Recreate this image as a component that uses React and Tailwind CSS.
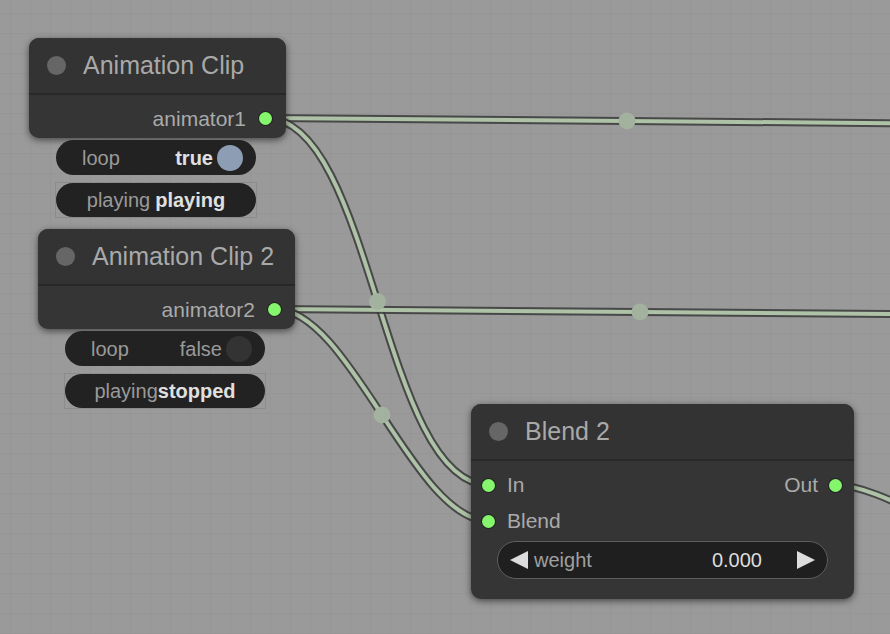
import React from "react";

// link endpoints (slot centers in canvas px)
const links = [
  { from: { x: 266, y: 118 }, to: { x: 988, y: 124 } },
  { from: { x: 266, y: 118 }, to: { x: 489, y: 485 } },
  { from: { x: 275, y: 309 }, to: { x: 1005, y: 315 } },
  { from: { x: 275, y: 309 }, to: { x: 489, y: 521 } },
  { from: { x: 836, y: 485 }, to: { x: 1010, y: 545 } },
];

const curve = (a, b) => {
  const d = Math.hypot(b.x - a.x, b.y - a.y) * 0.25;
  return {
    path: `M${a.x},${a.y} C${a.x + d},${a.y} ${b.x - d},${b.y} ${b.x},${b.y}`,
    mid: { x: (a.x + b.x) / 2, y: (a.y + b.y) / 2 },
  };
};

const Dot = () => (
  <span className="w-[13px] h-[13px] shrink-0 rounded-full bg-[#86f56e] shadow-[0_0_0_1px_rgba(0,0,0,0.35)]" />
);

const NodeTitle = ({ title }) => (
  <div className="h-[57px] flex items-center gap-[17px] pl-[18px] bg-[#333333] rounded-t-[10px] border-b-2 border-[#282828]">
    <span className="w-[19px] h-[19px] rounded-full bg-[#666666]" />
    <span className="text-[25px] text-[#a9a9a9]">{title}</span>
  </div>
);

const ClipNode = ({ pos, title, output, loop, playing }) => (
  <div className={`absolute ${pos} w-[257px]`}>
    <div className="rounded-[10px] bg-[#353535] shadow-[0_2px_7px_rgba(0,0,0,0.55)]">
      <NodeTitle title={title} />
      <div className="h-[43px] flex items-center justify-end gap-[13px] pr-[14px] pt-[4px]">
        <span className="text-[21px] text-[#aaaaaa]">{output}</span>
        <Dot />
      </div>
    </div>
    <div className="ml-[27px] mr-[30px] mt-[2px] h-[35px] rounded-full bg-[#222222] flex items-center pl-[26px] pr-[13px] text-[20px]">
      <span className="text-[#9a9a9a]">loop</span>
      <span className={`ml-auto mr-[4px] ${loop ? "text-[#e0e0e0] font-bold" : "text-[#9a9a9a]"}`}>{loop ? "true" : "false"}</span>
      <span className={`w-[26px] h-[26px] rounded-full ${loop ? "bg-[#8d9db4]" : "bg-[#333333]"}`} />
    </div>
    <div className="ml-[26px] mr-[29px] mt-[7px] p-[1px] border border-[#8c8c8c]">
      <div className="h-[34px] rounded-full bg-[#222222] flex items-center justify-center text-[20px] -m-[1px]">
        <span className="text-[#9a9a9a]">playing</span>
        <span className={`text-[#e0e0e0] font-bold ${playing ? "ml-[5px]" : ""}`}>{playing ? "playing" : "stopped"}</span>
      </div>
    </div>
  </div>
);

const Tri = ({ dir }) => (
  <svg width="20" height="20" viewBox="0 0 20 20">
    {dir === "left" ? <polygon points="19,1 19,19 1,10" fill="#dddddd" /> : <polygon points="1,1 1,19 19,10" fill="#dddddd" />}
  </svg>
);

export default function App() {
  return (
    <div className="relative w-[890px] h-[634px] overflow-hidden bg-[#9a9a9a] font-['Liberation_Sans',Arial,sans-serif]">
      <svg className="absolute inset-0" width="890" height="634">
        <defs>
          <pattern id="grid" x="10" y="13" width="20" height="20" patternUnits="userSpaceOnUse">
            <path d="M20,0 L0,0 L0,20" fill="none" stroke="#919191" strokeWidth="1" />
          </pattern>
        </defs>
        <rect width="890" height="634" fill="url(#grid)" />
        {links.map((l, i) => {
          const c = curve(l.from, l.to);
          return (
            <g key={i}>
              <path d={c.path} fill="none" stroke="#3a3a3a" strokeWidth="8" strokeOpacity="0.85" />
              <path d={c.path} fill="none" stroke="#adc2a6" strokeWidth="4" />
            </g>
          );
        })}
        {links.slice(0, 4).map((l, i) => {
          const c = curve(l.from, l.to);
          return <circle key={i} cx={c.mid.x} cy={c.mid.y} r="8.5" fill="#a3b19f" />;
        })}
      </svg>

      <ClipNode pos="left-[29px] top-[38px]" title="Animation Clip" output="animator1" loop playing />
      <ClipNode pos="left-[38px] top-[229px]" title="Animation Clip 2" output="animator2" loop={false} playing={false} />

      <div className="absolute left-[471px] top-[404px] w-[383px] rounded-[10px] bg-[#353535] shadow-[0_2px_7px_rgba(0,0,0,0.55)]">
        <NodeTitle title="Blend 2" />
        <div className="pt-[6px] pb-[20px]">
          <div className="h-[36px] flex items-center pl-[11px] pr-[12px] text-[21px] text-[#aaaaaa]">
            <Dot />
            <span className="ml-[12px]">In</span>
            <span className="ml-auto mr-[11px]">Out</span>
            <Dot />
          </div>
          <div className="h-[36px] flex items-center pl-[11px] text-[21px] text-[#aaaaaa]">
            <Dot />
            <span className="ml-[12px]">Blend</span>
          </div>
          <div className="mx-[26px] mt-[2px] h-[38px] rounded-full bg-[#1f1f1f] border-[1.5px] border-[#5e5e5e] flex items-center pl-[11px] pr-[11px] text-[20px]">
            <Tri dir="left" />
            <span className="ml-[5px] text-[#a0a0a0]">weight</span>
            <span className="ml-auto mr-[34px] text-[#dddddd]">0.000</span>
            <Tri dir="right" />
          </div>
        </div>
      </div>
    </div>
  );
}
